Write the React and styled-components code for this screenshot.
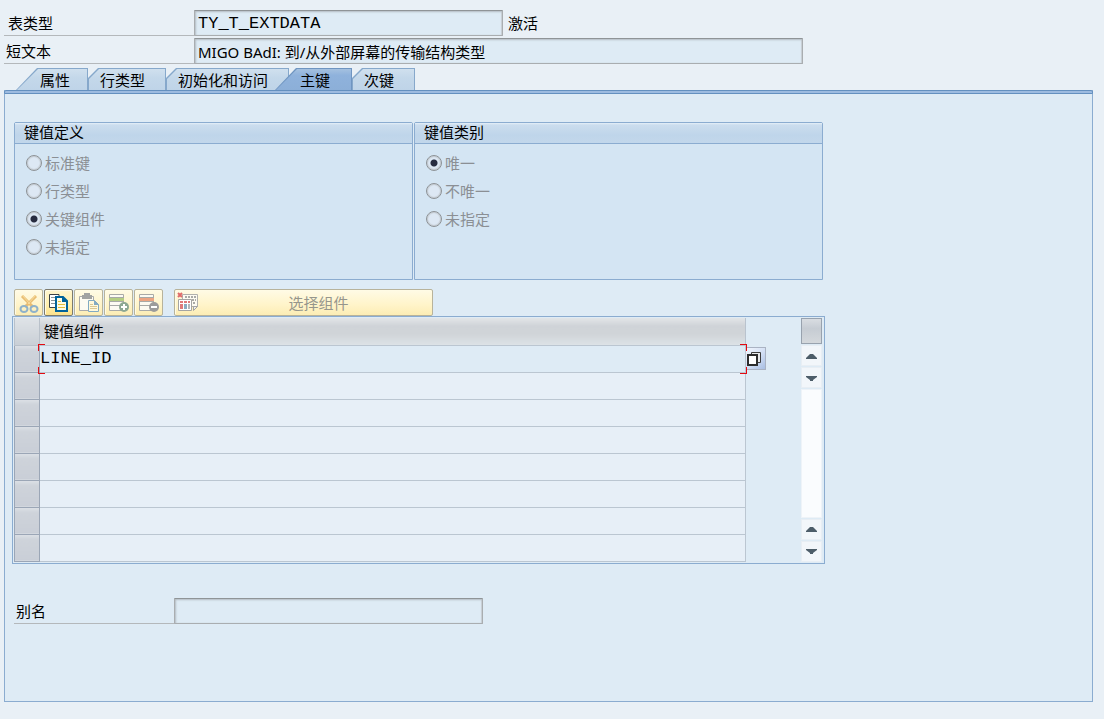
import React, { useState } from 'react';
import styled, { createGlobalStyle, css } from 'styled-components';

const GlobalStyle = createGlobalStyle`
  *,
  *::before,
  *::after {
    box-sizing: border-box;
  }

  body {
    margin: 0;
    min-height: 100vh;
    background: #e9f0f6;
    color: #000;
    font-family: 'Noto Sans', 'Noto Sans CJK SC', sans-serif;
    font-size: 15px;
    line-height: 20px;
  }

  #root {
    min-height: 100vh;
    display: flex;
  }

  button,
  input {
    font: inherit;
    color: inherit;
  }
`;

const Screen = styled.div`
  flex: 1;
  display: flex;
  flex-direction: column;
  padding: 10px 11px 17px 4px;
`;

const HeaderRow = styled.div`
  display: flex;
  align-items: stretch;
  margin-bottom: ${props => props.$last ? '4px' : '2px'};
`;

const FieldLabel = styled.label`
  width: ${props => props.$width};
  padding: 3px 0 0 ${props => props.$indent};
  border-bottom: 1px solid #b4b8bb;
  white-space: nowrap;
`;

const Field = styled.input`
  width: ${props => props.$width};
  height: 26px;
  padding: 0 3px;
  border: 1px solid #a9adb0;
  border-top-color: #8f9497;
  border-radius: 1px;
  background: #deebf5;
  box-shadow: inset 1px 1px 2px #b4bcc2, inset -1px 0 1px #c8ced3;
  outline: none;

  ${props => props.$mono && css`
    font-family: 'Liberation Mono', monospace;
    font-size: 17px;
  `}
`;

const Status = styled.span`
  padding: 3px 0 0 5px;
`;

const TabList = styled.div`
  display: flex;
  padding-left: 12px;
  height: 22px;
`;

const Tab = styled.button`
  position: relative;
  z-index: ${props => props.$active ? 1 : 0};
  width: ${props => props.$width};
  margin: 0 0 0 ${props => props.$active ? '-14px' : '0'};
  padding: 1px 0 0 ${props => props.$indent};
  border: 0;
  background: none;
  text-align: left;
  white-space: nowrap;
  cursor: pointer;

  &::before,
  &::after {
    content: '';
    position: absolute;
    z-index: -1;
    inset: 0;
    background: ${props => props.$active ? '#6f95c1' : '#86a8cb'};
    clip-path: ${props => props.$slant === 'full'
      ? 'polygon(0 100%, 21px 0, 100% 0, 100% 100%)'
      : 'polygon(0 10px, 10px 0, 100% 0, 100% 100%, 0 100%)'};
  }

  &::after {
    inset: 1px 1px 0 1px;
    background: ${props => props.$active
      ? 'linear-gradient(#a5c1e0, #8fb2dc 30%, #8cafd8)'
      : 'linear-gradient(#d0e0ee, #c4d8ea 40%, #bfd4e8)'};
  }
`;

const TabText = styled.span`
  position: relative;
`;

const Panel = styled.section`
  flex: 1;
  border: 1px solid #8bacd0;
  border-top: 0;
  background: #deebf5;

  &::before {
    content: '';
    display: block;
    height: 4px;
    margin: 0 -1px;
    border: 1px solid #6490bf;
    border-radius: 2px 2px 0 0;
    background: #9dbbe0;
  }
`;

const PanelBody = styled.div`
  width: 822px;
  max-width: 100%;
  padding: 28px 0 0 9px;
`;

const Groups = styled.div`
  display: grid;
  grid-template-columns: 399fr 409fr;
  gap: 1px;
  margin-right: 4px;
`;

const Group = styled.fieldset`
  min-width: 0;
  height: 158px;
  margin: 0;
  padding: 0;
  border: 1px solid #8bacd0;
  border-radius: 2px 2px 0 0;
  background: #d4e5f3;
`;

const GroupTitle = styled.legend`
  float: left;
  width: 100%;
  height: 21px;
  padding: 0 9px;
  border-bottom: 1px solid #8bacd0;
  background: linear-gradient(#e6f0f8 0, #cbddee 2px, #bfd5ea 60%, #c2d7eb);
  line-height: 19px;
`;

const Options = styled.div`
  clear: both;
  display: flex;
  flex-direction: column;
  gap: 8px;
  padding: 9px 11px;
`;

const Option = styled.label`
  display: flex;
  align-items: center;
  gap: 3px;
  color: #8b8f94;
`;

const Radio = styled.input`
  appearance: none;
  width: 16px;
  height: 16px;
  margin: 0;
  border: 1px solid #8d9296;
  border-radius: 50%;
  background: #dde8f4;
  box-shadow: inset 0 0 1px 1px #c3cad0;

  &:checked {
    background: radial-gradient(circle, #272c40 0 3px, #dde8f4 4px);
  }
`;

const Toolbar = styled.div`
  display: flex;
  gap: 1px;
  height: 27px;
  margin-top: 9px;
`;

const ToolButton = styled.button`
  display: flex;
  align-items: center;
  justify-content: center;
  width: 29px;
  padding: 0;
  border: 1px solid ${props => props.$active ? '#7d7a6c' : '#b8b39b'};
  border-radius: 2px;
  background: ${props => props.$active
    ? 'linear-gradient(#fff6cf, #ffefad 60%, #fbe28c)'
    : 'linear-gradient(#fffbe6, #fff4c9 60%, #fcedb4)'};
  box-shadow: inset 1px 1px 0 #fffbe5;
`;

const SelectButton = styled(ToolButton)`
  width: 259px;
  margin-left: 10px;
  padding: 0 2px;
  color: #96968c;

  span {
    flex: 1;
    padding-left: 8px;
  }
`;

const TableFrame = styled.div`
  display: flex;
  align-items: flex-start;
  margin-left: -2px;
  margin-right: 2px;
  padding: 1px 2px 1px 1px;
  border: 1px solid #8bacd0;
`;

const Grid = styled.table`
  width: 732px;
  border-collapse: collapse;
  table-layout: fixed;

  tr {
    height: 27px;
  }
`;

const Corner = styled.th`
  width: 25px;
  padding: 0;
  border: 1px solid #b9c1ca;
  border-top: 0;
  background: linear-gradient(#dfe3e7, #c9cfd6);
`;

const ColumnTitle = styled.th`
  padding: 0 4px;
  border-right: 1px solid #b9c3ce;
  background: linear-gradient(#e2e5e7 0, #cfd3d8 30%, #d0d4d8 60%, #dce2e6);
  font-weight: normal;
  text-align: left;
`;

const RowHead = styled.td`
  padding: 0;
  border: 1px solid #9ba6b6;
  background: linear-gradient(#dde1e7 0, #ced3da 5px, #c9ced7);
`;

const Cell = styled.td`
  position: relative;
  z-index: ${props => props.$active ? 1 : 0};
  padding: 0;
  border: 1px solid #bbc6d1;
  background: ${props => props.$active ? '#deebf5' : '#e7eff7'};
`;

const CellInput = styled.input`
  display: block;
  width: 100%;
  height: 26px;
  padding: 0;
  border: 0;
  outline: none;
  background: transparent;
  font-family: 'Liberation Mono', monospace;
  font-size: 17px;
`;

const Bracket = styled.span`
  position: absolute;
  width: 7px;
  height: 7px;
  border: 0 solid #e30b12;
  pointer-events: none;
  ${props => props.$y}: -2px;
  ${props => props.$x}: -2px;
  border-${props => props.$y}-width: 1px;
  border-${props => props.$x}-width: 1px;
`;

const HelpButton = styled.button`
  display: flex;
  align-items: center;
  width: 20px;
  height: 23px;
  margin-top: 29px;
  padding: 0;
  border: 1px solid #aab3c3;
  border-left: 0;
  background: linear-gradient(135deg, #f2f6fd, #d5e1f5 50%, #a9bfe3);
`;

const ScrollColumn = styled.div`
  align-self: stretch;
  display: flex;
  flex-direction: column;
  gap: 1px;
  width: 21px;
  margin-left: auto;
`;

const ConfigButton = styled.button`
  height: 26px;
  padding: 0;
  border: 1px solid #98a2ae;
  background: linear-gradient(#d9dde2, #c6ccd3 40%, #d4d8dc);
`;

const ArrowButton = styled.button`
  display: flex;
  align-items: center;
  justify-content: center;
  height: 21px;
  padding: 0;
  border: 1px solid #e8eef4;
  background: #f2f6fa;
`;

const Track = styled.div`
  flex: 1;
  border: 1px solid #eef3f8;
  background: #fafcfe;
`;

const AliasRow = styled.div`
  display: flex;
  margin-top: 34px;
`;

const ScissorsIcon = () => (
  <svg width="22" height="22" viewBox="0 0 22 22" fill="none">
    <path d="M4 4 L15 15 M18 4 L7 15" stroke="#e9bd72" strokeWidth="3" />
    <path d="M4 3 L12 12 M18 3 L10 12" stroke="#f7dda0" strokeWidth="1" />
    <ellipse cx="6" cy="17" rx="3.5" ry="3" stroke="#8fb2ca" strokeWidth="2" />
    <ellipse cx="16" cy="17" rx="3.5" ry="3" stroke="#8fb2ca" strokeWidth="2" />
  </svg>
);

const CopyIcon = () => (
  <svg width="22" height="22" viewBox="0 0 22 22">
    <path d="M1.5 2.5H11V15.5H1.5Z" fill="#fff" stroke="#3b4248" />
    <path d="M3 5.5h4M3 8.5h4M3 11.5h4" stroke="#8c969c" />
    <path d="M8 5H15L19 9V19H8Z" fill="#fffbe0" stroke="#00639b" strokeWidth="2" />
    <path d="M14 4V10H20Z" fill="#00639b" />
    <path d="M10 9.5h3M10 12.5h7M10 15.5h7" stroke="#e3bd3c" />
  </svg>
);

const PasteIcon = () => (
  <svg width="22" height="22" viewBox="0 0 22 22">
    <path d="M1.5 4.5H15.5V18.5H1.5Z" fill="#fdfbf2" stroke="#aaa" />
    <path d="M4 3H6V1H12V3H14V7H4Z" fill="#a2a3a2" />
    <path d="M10.5 8.5H16.5L20.5 12.5V19.5H10.5Z" fill="#fff9dc" stroke="#82aac2" />
    <path d="M16 8V13H21Z" fill="#82aac2" />
    <path d="M12 12.5h3M12 14.5h7M12 16.5h7" stroke="#d9c893" />
  </svg>
);

const RowIcon = ({ color, minus }) => (
  <svg width="22" height="22" viewBox="0 0 22 22">
    <path d="M1.5 2.5H15.5V18.5H1.5Z" fill="#fdfbf2" stroke="#a9aaa7" />
    <path d="M1 6H16V9H1Z" fill={color} />
    <path d="M1 5.5H16M1 9.5H16M1 13.5H16" stroke="#a9aaa7" />
    <circle cx="16" cy="15" r="5" fill={minus ? '#9b9b9b' : '#8da893'} />
    <path d={minus ? 'M13 15H19' : 'M13 15H19M16 12V18'} stroke="#fff" strokeWidth="2" />
  </svg>
);

const SelectIcon = () => (
  <svg width="22" height="22" viewBox="0 0 22 22">
    <path d="M5.5 2.5H20.5V14.5H5.5Z" fill="#fdfbf2" stroke="#b0b0ad" />
    <path d="M8 5H19M15 8H19M16 11H19" stroke="#a9a9a6" strokeWidth="2" strokeDasharray="2 1" />
    <path d="M1.5 7.5H14.5V18.5H1.5Z" fill="#fff" stroke="#a4a4a2" />
    <path d="M3 9h3v2H3zM7 9h3v2H7zM11 9h2v2h-2z" fill="#df7a7a" />
    <path d="M3 12h3v5H3z" fill="#df7a7a" />
    <path d="M7 12h3v5H7z" fill="#8cabc0" />
    <path d="M11 12h2v5h-2z" fill="#b4b7b8" />
    <path d="M1 1L5 5M5 1L1 5" stroke="#df6a6a" strokeWidth="2" />
    <path d="M16.5 14.5H20.5L16.5 18.5Z" fill="#eee" stroke="#a4a4a2" />
  </svg>
);

const MatchIcon = () => (
  <svg width="16" height="16" viewBox="0 0 16 16">
    <path d="M5.5 1.5H14.5V11.5H5.5Z" fill="#e8eaec" stroke="#3d3d3d" />
    <path d="M2 4H11V14H2Z" fill="#fff" stroke="#2d2d2d" strokeWidth="2" />
  </svg>
);

const Arrow = ({ up }) => (
  <svg width="11" height="6" viewBox="0 0 11 6">
    <path d={up ? 'M0 6V5L4 1H7L11 5V6Z' : 'M0 1H11V2L7 5V6H4V5L0 2Z'} fill="#4d5d69" />
  </svg>
);

const tabs = [
  { name: '属性', width: '72px', indent: '24px', slant: 'full' },
  { name: '行类型', width: '78px', indent: '12px' },
  { name: '初始化和访问', width: '123px', indent: '12px' },
  { name: '主键', width: '77px', indent: '25px', slant: 'full' },
  { name: '次键', width: '63px', indent: '12px' },
];

const rows = ['LINE_ID', '', '', '', '', '', '', ''];

const RadioGroup = ({ title, name, options, selected }) => {
  const [value, setValue] = useState(selected);

  return (
    <Group disabled>
      <GroupTitle>{title}</GroupTitle>
      <Options>
        {options.map(option => (
          <Option key={option}>
            <Radio
              type="radio"
              name={name}
              value={option}
              checked={value === option}
              onChange={() => setValue(option)}
            />
            {option}
          </Option>
        ))}
      </Options>
    </Group>
  );
};

const App = () => {
  const [activeTab, setActiveTab] = useState('主键');

  return (
    <>
      <GlobalStyle />
      <Screen>
        <HeaderRow>
          <FieldLabel htmlFor="type" $width="190px" $indent="4px">表类型</FieldLabel>
          <Field id="type" $width="309px" $mono readOnly value="TY_T_EXTDATA" />
          <Status>激活</Status>
        </HeaderRow>
        <HeaderRow $last>
          <FieldLabel htmlFor="text" $width="190px" $indent="2px">短文本</FieldLabel>
          <Field id="text" $width="609px" readOnly value="MIGO BAdI: 到/从外部屏幕的传输结构类型" />
        </HeaderRow>
        <TabList role="tablist">
          {tabs.map(tab => (
            <Tab
              key={tab.name}
              role="tab"
              aria-selected={activeTab === tab.name}
              $active={activeTab === tab.name}
              $width={tab.width}
              $indent={tab.indent}
              $slant={tab.slant}
              onClick={() => setActiveTab(tab.name)}
            >
              <TabText>{tab.name}</TabText>
            </Tab>
          ))}
        </TabList>
        <Panel>
          <PanelBody>
            <Groups>
              <RadioGroup
                title="键值定义"
                name="definition"
                options={['标准键', '行类型', '关键组件', '未指定']}
                selected="关键组件"
              />
              <RadioGroup
                title="键值类别"
                name="category"
                options={['唯一', '不唯一', '未指定']}
                selected="唯一"
              />
            </Groups>
            <Toolbar>
              <ToolButton aria-label="剪切" disabled><ScissorsIcon /></ToolButton>
              <ToolButton aria-label="复制" $active><CopyIcon /></ToolButton>
              <ToolButton aria-label="粘贴" disabled><PasteIcon /></ToolButton>
              <ToolButton aria-label="插入行" disabled><RowIcon color="#b5ce83" /></ToolButton>
              <ToolButton aria-label="删除行" disabled><RowIcon color="#eda583" minus /></ToolButton>
              <SelectButton disabled>
                <SelectIcon />
                <span>选择组件</span>
              </SelectButton>
            </Toolbar>
            <TableFrame>
              <Grid>
                <thead>
                  <tr>
                    <Corner />
                    <ColumnTitle>键值组件</ColumnTitle>
                  </tr>
                </thead>
                <tbody>
                  {rows.map((row, index) => (
                    <tr key={index}>
                      <RowHead />
                      <Cell $active={index === 0}>
                        <CellInput aria-label="键值组件" readOnly value={row} />
                        {index === 0 && (
                          <>
                            <Bracket $x="left" $y="top" />
                            <Bracket $x="left" $y="bottom" />
                            <Bracket $x="right" $y="top" />
                            <Bracket $x="right" $y="bottom" />
                          </>
                        )}
                      </Cell>
                    </tr>
                  ))}
                </tbody>
              </Grid>
              <HelpButton aria-label="值帮助"><MatchIcon /></HelpButton>
              <ScrollColumn>
                <ConfigButton aria-label="表设置" />
                <ArrowButton aria-label="上一行"><Arrow up /></ArrowButton>
                <ArrowButton aria-label="下一行"><Arrow /></ArrowButton>
                <Track />
                <ArrowButton aria-label="上一页"><Arrow up /></ArrowButton>
                <ArrowButton aria-label="下一页"><Arrow /></ArrowButton>
              </ScrollColumn>
            </TableFrame>
            <AliasRow>
              <FieldLabel htmlFor="alias" $width="160px" $indent="2px">别名</FieldLabel>
              <Field id="alias" $width="309px" readOnly value="" />
            </AliasRow>
          </PanelBody>
        </Panel>
      </Screen>
    </>
  );
};

export default App;
